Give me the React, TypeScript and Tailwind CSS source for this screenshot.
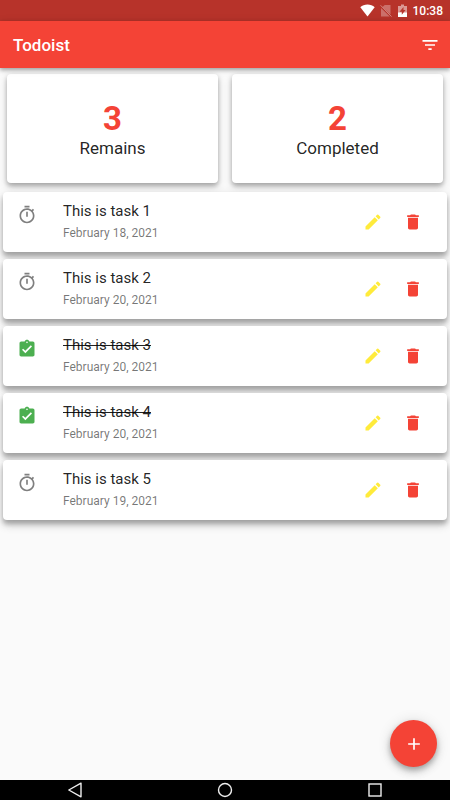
import React, { useState } from "react";
import { MdAdd, MdAssignmentTurnedIn, MdDelete, MdEdit, MdFilterList } from "react-icons/md";

type Task = { id: number; title: string; date: string; done: boolean };

const initialTasks: Task[] = [
  { id: 1, title: "This is task 1", date: "February 18, 2021", done: false },
  { id: 2, title: "This is task 2", date: "February 20, 2021", done: false },
  { id: 3, title: "This is task 3", date: "February 20, 2021", done: true },
  { id: 4, title: "This is task 4", date: "February 20, 2021", done: true },
  { id: 5, title: "This is task 5", date: "February 19, 2021", done: false },
];

const statShadow =
  "shadow-[0_3px_4px_rgba(0,0,0,0.2),0_4px_8px_rgba(0,0,0,0.14),0_1px_6px_rgba(0,0,0,0.08)]";
const taskShadow =
  "shadow-[0_4px_4px_rgba(0,0,0,0.2),0_6px_8px_rgba(0,0,0,0.14),0_2px_10px_rgba(0,0,0,0.1)]";

function TimerIcon() {
  return (
    <svg viewBox="0 0 24 24" className="size-5" fill="currentColor" aria-hidden="true">
      <path d="M15 1H9v2h6V1zm-4 13h2V8h-2v6zm8.03-6.61l1.42-1.42c-.43-.51-.9-.99-1.41-1.41l-1.42 1.42C16.07 4.74 14.12 4 12 4c-4.97 0-9 4.03-9 9s4.02 9 9 9 9-4.03 9-9c0-2.12-.74-4.07-1.97-5.61zM12 20c-3.87 0-7-3.13-7-7s3.13-7 7-7 7 3.13 7 7-3.13 7-7 7z" />
    </svg>
  );
}

function StatusBar() {
  return (
    <div className="flex h-[21px] shrink-0 items-center justify-end bg-[#b7332a] pr-[7px] text-white">
      <svg viewBox="0 0 15 13" className="mr-[5px] h-[13px] w-[15px]" fill="currentColor" aria-hidden="true">
        <path d="M7.5 12.4 0.3 3.3C2.2 1.5 4.7.5 7.5.5s5.300 1 7.200 2.800z" />
      </svg>
      <svg viewBox="0 0 12 14" className="mr-[6px] h-[14px] w-3" aria-hidden="true">
        <path d="M4.700 1H10.500V10.600L2.500 2.900zM1 4 9.800 12.600H1z" fill="#fff" fillOpacity="0.3" />
        <path d="M.6 1.300 11.500 12.600" stroke="#fff" strokeOpacity="0.4" strokeWidth="1" />
      </svg>
      <svg viewBox="0 0 9 14" className="mr-[6px] h-[14px] w-[9px]" aria-hidden="true">
        <path d="M3 .5h3v1.500h3V9H0V2h3z" fill="#fff" fillOpacity="0.5" />
        <path d="M0 8.500h9v4.500H0z" fill="#fff" />
        <path d="M5.500 3 1.500 7.800h2.300v3l3.700-4.800H5.500z" fill="#b7332a" />
      </svg>
      <span className="text-[12px] leading-[20px] font-medium">10:38</span>
    </div>
  );
}

function StatCard({ value, label }: { value: number; label: string }) {
  return (
    <div className={`flex h-[109px] flex-1 flex-col items-center justify-center rounded-[4px] bg-white ${statShadow}`}>
      <span className="text-[33px] leading-[39px] font-bold text-[#f44336]">{value}</span>
      <span className="text-[17px] leading-5 text-black/87">{label}</span>
    </div>
  );
}

function TaskCard({ task, onToggle, onDelete }: { task: Task; onToggle: () => void; onDelete: () => void }) {
  return (
    <li className={`flex h-[60px] items-center rounded-[4px] bg-white px-[14px] ${taskShadow}`}>
      <button
        type="button"
        onClick={onToggle}
        aria-label={`Toggle ${task.title}`}
        className={`mt-[13px] self-start ${task.done ? "text-[#4caf50]" : "text-black/50"}`}
      >
        {task.done ? <MdAssignmentTurnedIn className="size-5" /> : <TimerIcon />}
      </button>
      <div className="ml-[26px] flex min-w-0 flex-1 flex-col gap-1">
        <span className={`text-[15px] leading-[18px] text-black/87 ${task.done ? "line-through" : ""}`}>
          {task.title}
        </span>
        <span className="text-[12px] leading-[18px] text-black/54">{task.date}</span>
      </div>
      <button
        type="button"
        aria-label={`Edit ${task.title}`}
        className="flex size-10 items-center justify-center text-[#ffeb3b]"
      >
        <MdEdit className="size-5" />
      </button>
      <button
        type="button"
        onClick={onDelete}
        aria-label={`Delete ${task.title}`}
        className="flex size-10 items-center justify-center text-[#f44336]"
      >
        <MdDelete className="size-5" />
      </button>
    </li>
  );
}

function NavigationBar() {
  return (
    <nav className="flex h-5 shrink-0 items-center justify-around bg-black text-[#eee]">
      <button type="button" aria-label="Back" className="flex w-[150px] justify-center">
        <svg viewBox="0 0 16 16" className="size-4" fill="none" stroke="currentColor" strokeWidth="1.4">
          <path d="M14 1.200V14.800L1.800 8z" strokeLinejoin="round" />
        </svg>
      </button>
      <button type="button" aria-label="Home" className="flex w-[150px] justify-center">
        <svg viewBox="0 0 16 16" className="size-4" fill="none" stroke="currentColor" strokeWidth="1.4">
          <circle cx="8" cy="8" r="6.500" />
        </svg>
      </button>
      <button type="button" aria-label="Recent apps" className="flex w-[150px] justify-center">
        <svg viewBox="0 0 16 16" className="size-4" fill="none" stroke="currentColor" strokeWidth="1.4">
          <rect x="2" y="2" width="12" height="12" />
        </svg>
      </button>
    </nav>
  );
}

export default function App() {
  const [tasks, setTasks] = useState(initialTasks);
  const completed = tasks.filter((t) => t.done).length;

  const toggle = (id: number) => setTasks(tasks.map((t) => (t.id === id ? { ...t, done: !t.done } : t)));
  const remove = (id: number) => setTasks(tasks.filter((t) => t.id !== id));

  return (
    <div className="relative flex min-h-screen flex-col bg-[#fafafa] font-[Roboto,sans-serif]">
      <StatusBar />
      <header className="z-10 flex h-[47px] shrink-0 items-center justify-between bg-[#f44336] pr-[10px] pl-[13px] text-white shadow-[0_2px_4px_rgba(0,0,0,0.3),0_1px_8px_rgba(0,0,0,0.12)]">
        <h1 className="text-[17px] leading-5 font-medium">Todoist</h1>
        <button type="button" aria-label="Filter tasks">
          <MdFilterList className="size-5" />
        </button>
      </header>
      <main className="flex-1">
        <section className="flex gap-[14px] px-[7px] pt-[6px] pb-[9px]">
          <StatCard value={tasks.length - completed} label="Remains" />
          <StatCard value={completed} label="Completed" />
        </section>
        <ul className="flex flex-col gap-[7px] px-[3px]">
          {tasks.map((task) => (
            <TaskCard key={task.id} task={task} onToggle={() => toggle(task.id)} onDelete={() => remove(task.id)} />
          ))}
        </ul>
      </main>
      <button
        type="button"
        aria-label="Add task"
        className="absolute right-[13px] bottom-[33px] flex size-[47px] items-center justify-center rounded-full bg-[#f44336] text-white shadow-[0_3px_5px_rgba(0,0,0,0.2),0_5px_8px_rgba(0,0,0,0.14),0_1px_14px_rgba(0,0,0,0.12)]"
      >
        <MdAdd className="size-5" />
      </button>
      <NavigationBar />
    </div>
  );
}
